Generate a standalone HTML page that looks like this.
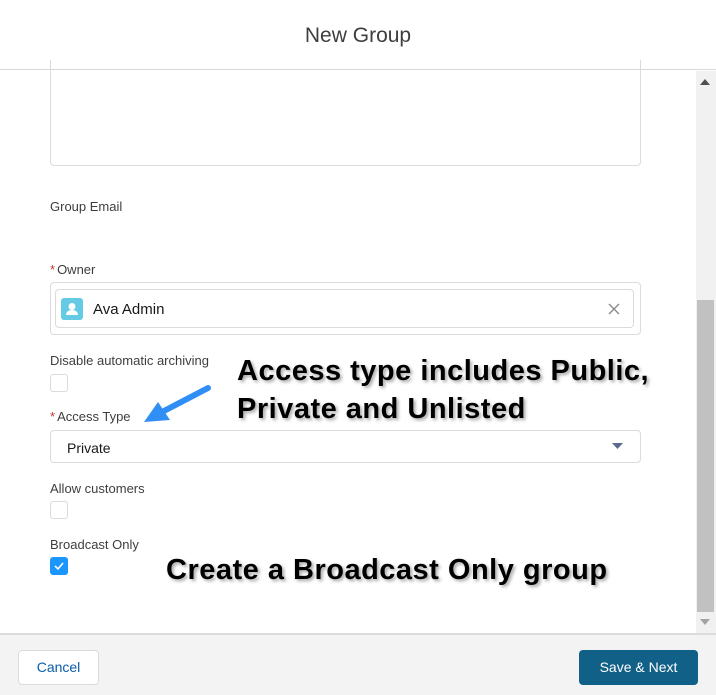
<!DOCTYPE html>
<html><head><meta charset="utf-8"><style>
*{box-sizing:border-box;margin:0;padding:0}
body{width:716px;height:695px;overflow:hidden;background:#fff;font-family:"Liberation Sans",sans-serif;position:relative;color:#3e3e3c}
.a{position:absolute}
.lbl{font-size:13px;color:#3e3e3c}
.req{color:#c23934;margin-right:2px}
.cb{width:18px;height:18px;border:1px solid #dddbda;border-radius:3px;background:#fff}
.big{font-weight:bold;font-size:29px;color:#000;text-shadow:2px 2px 3px rgba(0,0,0,.35);letter-spacing:0.5px;white-space:nowrap}
</style></head><body>
<div class="a" style="left:0;top:0;width:716px;height:70px;border-bottom:1px solid #d8d8d8;text-align:center;font-size:21px;color:#3e3e3c;line-height:72px">New Group</div>
<div class="a" style="left:50px;top:60px;width:591px;height:106px;border:1px solid #dddbda;border-top:none;border-radius:0 0 4px 4px"></div>
<div class="a lbl" style="left:50px;top:199px">Group Email</div>
<div class="a lbl" style="left:50px;top:262px"><span class="req">*</span>Owner</div>
<div class="a" style="left:50px;top:282px;width:591px;height:53px;border:1px solid #dddbda;border-radius:4px"></div>
<div class="a" style="left:55px;top:289px;width:579px;height:39px;border:1px solid #dddbda;border-radius:4px"></div>
<div class="a" style="left:61px;top:298px;width:22px;height:22px;background:#65cae4;border-radius:3px">
<svg width="22" height="22" viewBox="0 0 22 22"><circle cx="11" cy="8.5" r="3.5" fill="#fff"/><path d="M5 17c0-3.5 3-5 6-5s6 1.5 6 5z" fill="#fff"/></svg></div>
<div class="a" style="left:93px;top:301px;font-size:15px;color:#181818">Ava Admin</div>
<svg class="a" style="left:608px;top:303px" width="12" height="12" viewBox="0 0 12 12"><path d="M1 1L11 11M11 1L1 11" stroke="#888" stroke-width="1.3"/></svg>
<div class="a lbl" style="left:50px;top:353px">Disable automatic archiving</div>
<div class="a cb" style="left:50px;top:374px"></div>
<div class="a lbl" style="left:50px;top:409px"><span class="req">*</span>Access Type</div>
<div class="a" style="left:50px;top:430px;width:591px;height:33px;border:1px solid #dddbda;border-radius:4px"></div>
<div class="a" style="left:67px;top:440px;font-size:14px;color:#181818">Private</div>
<svg class="a" style="left:612px;top:443px" width="11" height="7" viewBox="0 0 11 7"><path d="M0 0h11L5.5 6z" fill="#5a6a8c"/></svg>
<div class="a lbl" style="left:50px;top:481px">Allow customers</div>
<div class="a cb" style="left:50px;top:501px"></div>
<div class="a lbl" style="left:50px;top:537px">Broadcast Only</div>
<div class="a" style="left:50px;top:557px;width:18px;height:18px;background:#1b96ff;border-radius:3px">
<svg width="18" height="18" viewBox="0 0 18 18"><path d="M5 9l3 3 5-6" stroke="#fff" stroke-width="1.6" fill="none"/></svg></div>
<svg class="a" style="left:140px;top:382px" width="75" height="45" viewBox="0 0 75 45"><path d="M68 6L22 30" stroke="#2f8ff5" stroke-width="6" stroke-linecap="round"/><path d="M4 40L18 20L30 38z" fill="#2f8ff5"/></svg>
<div class="a big" style="left:237px;top:352px;line-height:38px">Access type includes Public,<br>Private and Unlisted</div>
<div class="a big" style="left:166px;top:554px">Create a Broadcast Only group</div>
<div class="a" style="left:696px;top:71px;width:20px;height:563px;background:#f1f1f1"></div>
<svg class="a" style="left:700px;top:79px" width="10" height="6"><path d="M0 6L5 0L10 6z" fill="#505050"/></svg>
<div class="a" style="left:697px;top:300px;width:17px;height:312px;background:#c1c1c1"></div>
<svg class="a" style="left:700px;top:619px" width="10" height="6"><path d="M0 0L5 6L10 0z" fill="#a3a3a3"/></svg>
<div class="a" style="left:0;top:633px;width:716px;height:62px;background:#f3f3f3;border-top:2px solid #dddbda"></div>
<div class="a" style="left:18px;top:650px;width:81px;height:35px;background:#fff;border:1px solid #dddbda;border-radius:4px;color:#0b5cab;font-size:14px;text-align:center;line-height:33px">Cancel</div>
<div class="a" style="left:579px;top:650px;width:119px;height:35px;background:#106087;border-radius:4px;color:#fff;font-size:14px;text-align:center;line-height:35px">Save &amp; Next</div>
</body></html>
